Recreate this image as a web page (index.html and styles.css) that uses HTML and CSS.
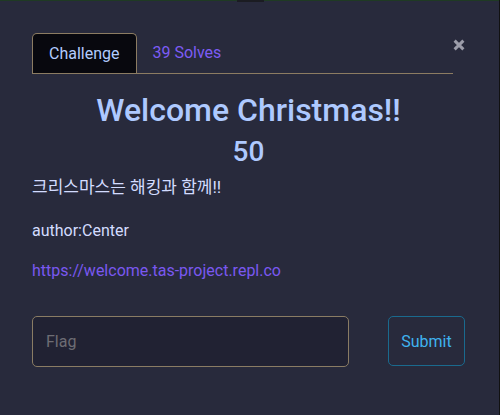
FILE: index.html
```html
<!DOCTYPE html>
<html>
<head>
<meta charset="utf-8">
<link rel="stylesheet" href="styles.css">
</head>
<body>
<div class="topbar"><span class="topnotch"></span></div>
<div class="modal">
  <button class="close" aria-label="Close">
    <svg width="12" height="12" viewBox="0 0 12 12"><path d="M1.6 1.6 L10.4 10.4 M10.4 1.6 L1.6 10.4" stroke="#9c9daa" stroke-width="3" stroke-linecap="butt"/></svg>
  </button>
  <div class="tabs">
    <div class="tab active">Challenge</div>
    <div class="tab">39 Solves</div>
  </div>
  <h2 class="title">Welcome Christmas!!</h2>
  <h3 class="value">50</h3>
  <div class="desc">
    <p class="kr">크리스마스는 해킹과 함께!!</p>
    <p>author:Center</p>
    <p><a class="link" href="#">https://welcome.tas-project.repl.co</a></p>
  </div>
  <form class="submit-row">
    <input class="flag" type="text" placeholder="Flag">
    <button class="submit" type="button">Submit</button>
  </form>
</div>
</body>
</html>
```
FILE: styles.css
```css
html, body {
  margin: 0;
  padding: 0;
  height: 100%;
}
body {
  background: #282a3c;
  font-family: Roboto, "Noto Sans CJK KR", sans-serif;
  color: #c9d6ff;
  border-right: 1px solid #111;
  box-sizing: border-box;
}
.topbar {
  height: 1px;
  background: #1f3a24;
  position: relative;
}
.topnotch {
  position: absolute;
  left: 237px;
  top: 0;
  width: 27px;
  height: 2px;
  background: #1b1c22;
}
.modal {
  position: relative;
  padding: 32px 34px 0 32px;
}
.close {
  position: absolute;
  right: 34px;
  top: 38px;
  width: 12px;
  height: 12px;
  background: none;
  border: none;
  padding: 0;
  display: block;
  cursor: pointer;
}
.close svg {
  display: block;
}
.tabs {
  display: flex;
  border-bottom: 1px solid #8c7c62;
  height: 40px;
  margin-right: 12px;
}
.tab {
  padding: 0 16px;
  line-height: 40px;
  font-size: 16px;
  color: #7d5cf5;
}
.active {
  background: #08080e;
  color: #b3ccff;
  border: 1px solid #8c7c62;
  border-bottom: none;
  border-radius: 5px 5px 0 0;
  line-height: 39px;
  padding: 0 16px;
}
.title {
  margin: 17px 0 0;
  text-align: center;
  font-size: 32px;
  font-weight: 500;
  color: #aec9ff;
  line-height: 38px;
}
.value {
  margin: 6px 0 0;
  text-align: center;
  font-size: 28px;
  font-weight: 500;
  color: #aec9ff;
  line-height: 34px;
}
.desc p {
  margin: 0 0 16px;
  font-size: 16px;
  line-height: 24px;
  color: #d3dcff;
}
.desc .kr {
  font-size: 17px;
  margin-top: 6px;
  margin-bottom: 20px;
}
.desc p:last-child {
  margin-bottom: 0;
}
.link {
  color: #7a58f0;
  text-decoration: none;
}
.submit-row {
  display: flex;
  justify-content: space-between;
  align-items: flex-start;
  margin: 33px 0 0;
}
.flag {
  width: 317px;
  height: 51px;
  box-sizing: border-box;
  background: #212233;
  border: 1px solid #8a7c64;
  border-radius: 5px;
  padding: 0 13px;
  font-family: Roboto, sans-serif;
  font-size: 16px;
  color: #ddd;
  outline: none;
}
.flag::placeholder {
  color: #6d6d74;
}
.submit {
  width: 77px;
  height: 50px;
  background: transparent;
  border: 1px solid #1a6a8e;
  border-radius: 5px;
  color: #3fb3ef;
  font-family: Roboto, sans-serif;
  font-size: 16px;
  padding: 0;
}
```
